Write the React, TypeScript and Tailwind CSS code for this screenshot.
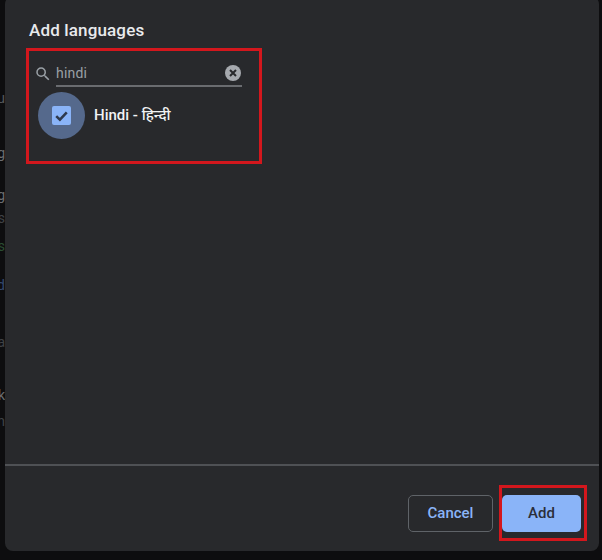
const peek = [
  { text: "u", top: "mt-[89px]", color: "text-[#54575c]" },
  { text: "g", top: "mt-[37px]", color: "text-[#6a6d72]" },
  { text: "g", top: "mt-[24px]", color: "text-[#6a6d72]" },
  { text: "s", top: "mt-[5px]", color: "text-[#3f4246]" },
  { text: "s", top: "mt-[10px]", color: "text-[#2a4d32]" },
  { text: "d", top: "mt-[21px]", color: "text-[#34496f]" },
  { text: "a", top: "mt-[39px]", color: "text-[#3f4246]" },
  { text: "k", top: "mt-[35px]", color: "text-[#6a6d72]" },
  { text: "n", top: "mt-[8px]", color: "text-[#3f4246]" },
];

function Backdrop() {
  return (
    <div className="w-[5px] shrink-0 overflow-hidden">
      {peek.map((p, i) => (
        <div
          key={i}
          className={`${p.top} ${p.color} w-[5px] flex justify-end text-[14px] leading-[18px]`}
        >
          {p.text}
        </div>
      ))}
    </div>
  );
}

export default function App() {
  return (
    <div className="w-[602px] h-[560px] overflow-hidden flex bg-[#0d0d0f] font-['Roboto','Noto_Sans',sans-serif]">
      <Backdrop />
      <div className="w-[594px] h-[555px] -mt-[4px] shrink-0 rounded-lg bg-[#28292c] flex flex-col">
        <h1 className="pl-[24px] pt-[24px] text-[17px] leading-[20px] font-medium tracking-[0.15px] text-[#e8eaed]">
          Add languages
        </h1>

        <div className="ml-[21px] mt-[8px] w-[236px] h-[116px] border-[3px] border-[#d3171d] pl-[5px] pt-[10px]">
          <div className="flex items-center h-[26px]">
            <svg viewBox="0 0 24 24" className="size-[18px] shrink-0" fill="#9aa0a6">
              <path d="M15.5 14h-.79l-.28-.27A6.471 6.471 0 0 0 16 9.5 6.5 6.5 0 1 0 9.5 16c1.61 0 3.09-.59 4.23-1.57l.27.28v.79l5 4.99L20.49 19l-4.99-5zm-6 0C7.01 14 5 11.99 5 9.5S7.01 5 9.5 5 14 7.01 14 9.5 11.99 14 9.5 14z" />
            </svg>
            <div className="ml-[4px] w-[186px] h-[26px] border-b-2 border-[#6a6c70] flex items-center justify-between pr-[1px]">
              <span className="text-[14px] text-[#9aa0a6] tracking-[0.2px]">hindi</span>
              <svg viewBox="0 0 16 16" className="size-[16px]">
                <circle cx="8" cy="8" r="8" fill="#a6a9ae" />
                <path d="M5 5l6 6M11 5l-6 6" stroke="#28292c" strokeWidth="2" />
              </svg>
            </div>
          </div>
          <div className="flex items-center ml-[4px] mt-[5px]">
            <div className="size-[47px] rounded-full bg-[#55698c] flex items-center justify-center">
              <div className="size-[19px] rounded-[2px] bg-[#8ab4f8] flex items-center justify-center">
                <svg viewBox="0 0 18 18" className="size-[19px]">
                  <path d="M4 9.5l3.5 3.5L14 6" fill="none" stroke="#2f3a4d" strokeWidth="2.4" />
                </svg>
              </div>
            </div>
            <span className="ml-[9px] text-[15px] font-medium text-[#f1f3f4] font-['Roboto','Noto_Sans','Noto_Sans_Devanagari',sans-serif]">
              Hindi - हिन्दी
            </span>
          </div>
        </div>

        <div className="mt-[300px] h-[2px] bg-[#4f5155]" />

        <div className="flex justify-end items-center gap-[6px] pr-[12px] pt-[19px]">
          <button className="w-[85px] h-[37px] rounded-[5px] border border-[#5f6368] text-[15px] font-medium text-[#8ab4f8]">
            Cancel
          </button>
          <div className="w-[88px] h-[56px] border-[3px] border-[#d3171d] flex items-center">
            <button className="w-[79px] h-[37px] rounded-[5px] bg-[#8ab4f8] text-[15px] font-medium text-[#2a2f3a]">
              Add
            </button>
          </div>
        </div>
      </div>
    </div>
  );
}
